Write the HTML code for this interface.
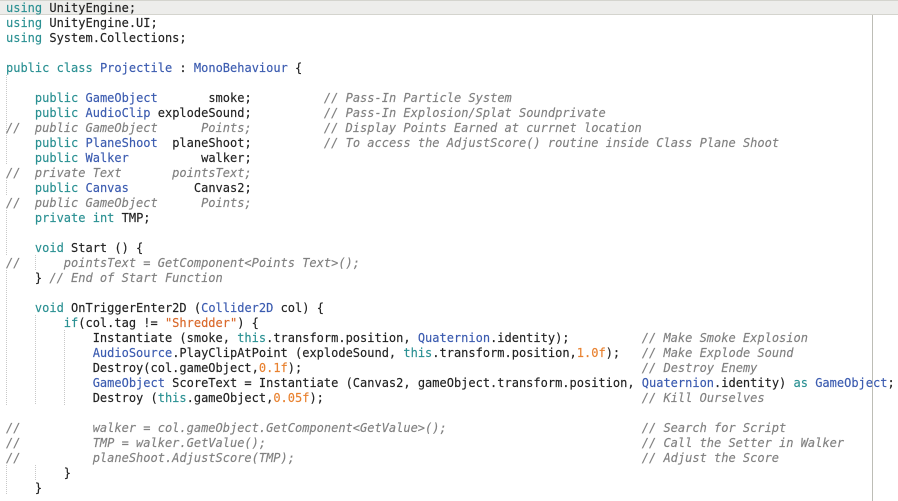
<!DOCTYPE html>
<html><head><meta charset="utf-8"><style>
html,body{margin:0;padding:0;background:#fff}
body{width:898px;height:501px;overflow:hidden;position:relative}
#bar{position:absolute;left:0;top:0;width:898px;height:13px;background:#ededeb;border-top:1px solid #d4d4ce;border-bottom:1px solid #d4d4ce}
#rule{position:absolute;left:872px;top:15px;width:1px;height:486px;background:#bdbdb6}
.g{position:absolute;width:1px;background-image:repeating-linear-gradient(to bottom,#c8c8c8 0,#c8c8c8 1px,transparent 1px,transparent 2px)}
pre{position:absolute;left:6px;top:1px;margin:0;font:12px/15px "DejaVu Sans Mono","Liberation Mono",monospace;color:#222;white-space:pre;-webkit-text-stroke:0.15px currentColor}
.k{color:#2a9092}.t{color:#3b5bb0}.c{color:#808080;font-style:italic}.n{color:#e8812f}.s{color:#d9682a}
</style></head><body>
<div id="bar"></div>
<div id="rule"></div>
<div class="g" style="left:6px;top:75px;height:90px"></div>
<div class="g" style="left:6px;top:180px;height:15px"></div>
<div class="g" style="left:6px;top:210px;height:45px"></div>
<div class="g" style="left:6px;top:270px;height:135px"></div>
<div class="g" style="left:6px;top:465px;height:30px"></div>
<div class="g" style="left:35px;top:315px;height:90px"></div>
<div class="g" style="left:35px;top:465px;height:15px"></div>
<div class="g" style="left:35px;top:255px;height:15px"></div>
<div class="g" style="left:64px;top:330px;height:75px"></div>
<pre><span class="k">using</span> UnityEngine;
<span class="k">using</span> UnityEngine.UI;
<span class="k">using</span> System.Collections;

<span class="k">public</span> <span class="k">class</span> <span class="t">Projectile</span> : <span class="t">MonoBehaviour</span> {

    <span class="k">public</span> <span class="t">GameObject</span>       smoke;          <span class="c">// Pass-In Particle System</span>
    <span class="k">public</span> <span class="t">AudioClip</span> explodeSound;          <span class="c">// Pass-In Explosion/Splat Soundprivate</span>
<span class="c">//  public GameObject      Points;          // Display Points Earned at currnet location</span>
    <span class="k">public</span> <span class="t">PlaneShoot</span>  planeShoot;          <span class="c">// To access the AdjustScore() routine inside Class Plane Shoot</span>
    <span class="k">public</span> <span class="t">Walker</span>          walker;
<span class="c">//  private Text       pointsText;</span>
    <span class="k">public</span> <span class="t">Canvas</span>         Canvas2;
<span class="c">//  public GameObject      Points;</span>
    <span class="k">private</span> <span class="k">int</span> TMP;

    <span class="k">void</span> Start () {
<span class="c">//      pointsText = GetComponent&lt;Points Text&gt;();</span>
    } <span class="c">// End of Start Function</span>

    <span class="k">void</span> OnTriggerEnter2D (<span class="t">Collider2D</span> col) {
        <span class="k">if</span>(col.tag != <span class="s">"Shredder"</span>) {
            Instantiate (smoke, <span class="k">this</span>.transform.position, <span class="t">Quaternion</span>.identity);          <span class="c">// Make Smoke Explosion</span>
            <span class="t">AudioSource</span>.PlayClipAtPoint (explodeSound, <span class="k">this</span>.transform.position,<span class="n">1.0f</span>);   <span class="c">// Make Explode Sound</span>
            Destroy(col.gameObject,<span class="n">0.1f</span>);                                               <span class="c">// Destroy Enemy</span>
            <span class="t">GameObject</span> ScoreText = Instantiate (Canvas2, gameObject.transform.position, <span class="t">Quaternion</span>.identity) <span class="k">as</span> <span class="t">GameObject</span>;
            Destroy (<span class="k">this</span>.gameObject,<span class="n">0.05f</span>);                                            <span class="c">// Kill Ourselves</span>

<span class="c">//          walker = col.gameObject.GetComponent&lt;GetValue&gt;();                           // Search for Script</span>
<span class="c">//          TMP = walker.GetValue();                                                    // Call the Setter in Walker</span>
<span class="c">//          planeShoot.AdjustScore(TMP);                                                // Adjust the Score</span>
        }
    }
</pre>
</body></html>
